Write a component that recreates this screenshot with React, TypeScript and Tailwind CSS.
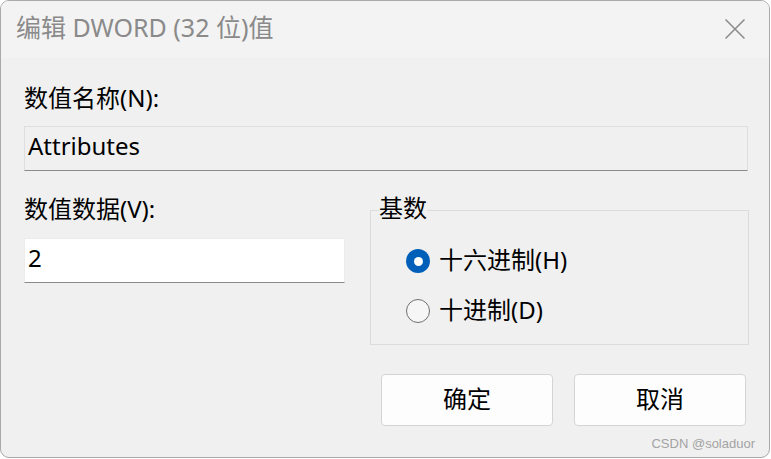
// Win11 "Edit DWORD (32-bit) Value" dialog

const FONT = { fontFamily: '"Noto Sans", "Noto Sans CJK SC", sans-serif' }

function Radio({ checked, label }: { checked?: boolean; label: string }) {
  return (
    <div className="flex items-center h-[32px]">
      {checked ? (
        <span className="w-[24px] h-[24px] rounded-full bg-[#005fb8] flex items-center justify-center shrink-0">
          <span className="w-[9px] h-[9px] rounded-full bg-white" />
        </span>
      ) : (
        <span className="w-[24px] h-[24px] rounded-full border border-[#6f6f6f] bg-[#f6f6f6] shrink-0" />
      )}
      <span className="ml-[9px] text-[24px] leading-[32px] text-black pb-[3px]">{label}</span>
    </div>
  )
}

export default function App() {
  return (
    <div className="w-[771px] h-[459px] bg-white" style={FONT}>
      <div className="relative w-[770px] h-[458px] rounded-[9px] border border-[#a9a9a9] bg-[#f0f0f0] overflow-hidden flex flex-col">
        {/* Title bar */}
        <div className="h-[57px] bg-[#f3f3f3] flex items-center justify-between pl-[15px] pr-[24px] shrink-0">
          <span className="text-[25px] leading-[32px] text-[#8a8a8a] pb-[5px]">编辑 DWORD (32 位)值</span>
          <svg width="20" height="20" viewBox="0 0 20 20" className="mb-[2px]">
            <path d="M0.5 0.5 L19.5 19.5 M19.5 0.5 L0.5 19.5" stroke="#8a8a8a" strokeWidth="1.5" fill="none" />
          </svg>
        </div>

        {/* Body */}
        <div className="pl-[23px] pr-[20px] pt-[24px]">
          <div className="h-[34px] flex items-start">
            <span className="text-[24px] leading-[32px] text-black">数值名称(N):</span>
          </div>
          <div className="mt-[10px] h-[45px] w-[724px] border border-[#dedede] border-b-[#8a8a8a] bg-[#f0f0f0] pl-[3px] pb-[5px] flex items-center">
            <span className="text-[24px] leading-[32px] text-black">Attributes</span>
          </div>

          <div className="flex mt-[24px]">
            <div className="w-[321px] shrink-0">
              <div className="h-[32px] flex items-start">
                <span className="text-[24px] leading-[32px] text-black -translate-y-[2px]">数值数据(V):</span>
              </div>
              <div className="mt-[11px] h-[45px] border border-[#ececec] border-b-[#8a8a8a] bg-white pl-[3px] pb-[5px] flex items-center">
                <span className="text-[24px] leading-[32px] text-black">2</span>
              </div>
            </div>

            <div className="ml-[25px] w-[379px] shrink-0 flex flex-col">
              <div className="relative mt-[15px] h-[135px] border border-[#dcdcdc] pl-[35px] pt-[34px] flex flex-col gap-[18px]">
                <span className="absolute left-[8px] -top-[19px] bg-[#f0f0f0] text-[24px] leading-[32px] text-black">基数</span>
                <Radio checked label="十六进制(H)" />
                <Radio label="十进制(D)" />
              </div>

              <div className="flex gap-[21px] mt-[29px] pl-[11px]">
                <button className="w-[172px] h-[52px] rounded-[4px] border border-[#d4d4d4] bg-[#fdfdfd] text-[24px] text-black pb-[3px]">确定</button>
                <button className="w-[172px] h-[52px] rounded-[4px] border border-[#d4d4d4] bg-[#fdfdfd] text-[24px] text-black pb-[3px]">取消</button>
              </div>
            </div>
          </div>
        </div>

        <span
          className="absolute right-[14px] bottom-[4px] text-[13px] text-[#a3a3a3]"
          style={{ fontFamily: '"Liberation Sans", Arial, sans-serif' }}
        >
          CSDN @soladuor
        </span>
      </div>
    </div>
  )
}
